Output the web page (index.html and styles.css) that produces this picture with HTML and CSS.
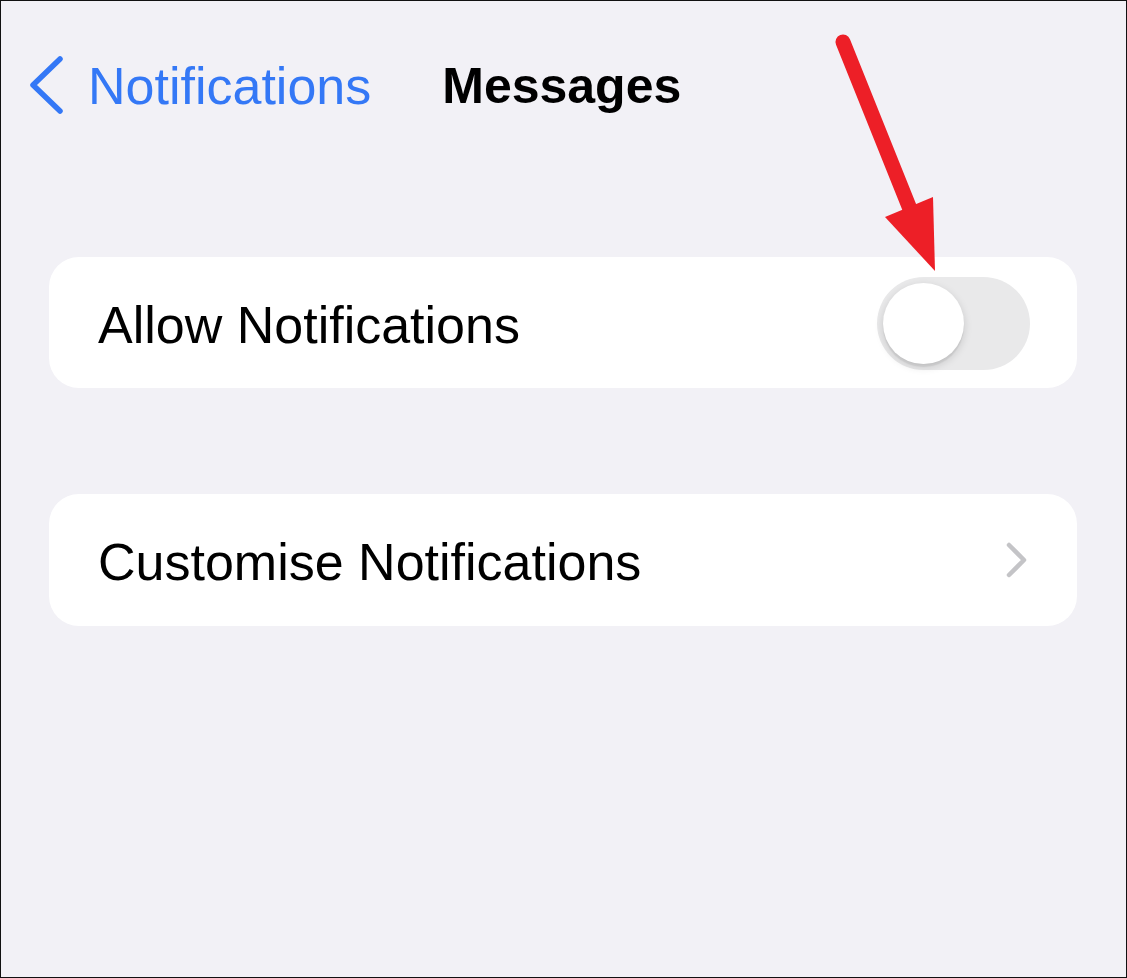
FILE: index.html
```html
<!DOCTYPE html>
<html lang="en">
<head>
  <meta charset="UTF-8">
  <meta name="viewport" content="width=device-width, initial-scale=1.0">
  <title>Messages</title>
  <link rel="stylesheet" href="styles.css">
</head>
<body>

<div class="screen">
  <div class="nav">
    <a class="back" href="#">
      <svg class="back-icon" width="36" height="58" viewBox="0 0 36 58">
        <polyline points="31,3 4,29 31,55" fill="none" stroke="#3478f6" stroke-width="5.5" stroke-linecap="round" stroke-linejoin="round"/>
      </svg>
      <span class="back-label">Notifications</span>
    </a>
    <h1 class="title">Messages</h1>
  </div>

  <div class="group first">
    <span class="row-label">Allow Notifications</span>
    <div class="switch">
      <div class="knob"></div>
    </div>
  </div>

  <div class="group">
    <span class="row-label">Customise Notifications</span>
    <svg class="disclosure" width="22" height="36" viewBox="0 0 22 36">
      <polyline points="3,3 18,18 3,33" fill="none" stroke="#c4c4c7" stroke-width="4.5" stroke-linecap="round" stroke-linejoin="round"/>
    </svg>
  </div>

  <!-- red pointer drawn over the switch -->
  <svg class="pointer" width="1127" height="978" viewBox="0 0 1127 978">
    <line x1="843" y1="42" x2="912" y2="214" stroke="#ed1f27" stroke-width="15" stroke-linecap="round"/>
    <polygon points="885,217 933,197 935,271" fill="#ed1f27"/>
  </svg>
</div>

</body>
</html>
```

FILE: styles.css
```css
body {
  margin: 0;
  padding: 0;
  font-family: "Liberation Sans", Arial, sans-serif;
  background-color: #f2f1f6;
}
.screen {
  position: relative;
  box-sizing: border-box;
  height: 978px;
  border: 1px solid #111;
  background-color: #f2f1f6;
  overflow: hidden;
}
.nav {
  display: flex;
  align-items: center;
  height: 88px;
  margin-top: 41px;
  padding-left: 28px;
}
.back {
  display: flex;
  align-items: center;
  text-decoration: none;
  color: #3478f6;
}
.back-icon {
  margin-top: -2px;
}
.back-label {
  margin-left: 23px;
  font-size: 52px;
}
.title {
  margin: 0 0 0 71px;
  font-size: 50px;
  font-weight: bold;
  color: #000;
}
.group {
  display: flex;
  align-items: center;
  justify-content: space-between;
  box-sizing: border-box;
  height: 132px;
  margin: 106px 49px 0 48px;
  padding: 4px 49px 0 49px;
  background-color: #fff;
  border-radius: 30px;
}
.group.first {
  height: 131px;
  margin-top: 127px;
  padding-right: 47px;
}
.row-label {
  font-size: 52px;
  color: #000;
}
.switch {
  position: relative;
  width: 153px;
  height: 93px;
  margin-top: -3px;
  border-radius: 47px;
  background-color: #e9e9ea;
}
.knob {
  position: absolute;
  top: 6px;
  left: 6px;
  width: 81px;
  height: 81px;
  border-radius: 50%;
  background-color: #fff;
  box-shadow: 0 3px 8px rgba(0, 0, 0, 0.15), 0 3px 1px rgba(0, 0, 0, 0.06);
}
.disclosure {
  margin-top: -4px;
}
.pointer {
  position: absolute;
  top: -1px;
  left: -1px;
  pointer-events: none;
}
```
